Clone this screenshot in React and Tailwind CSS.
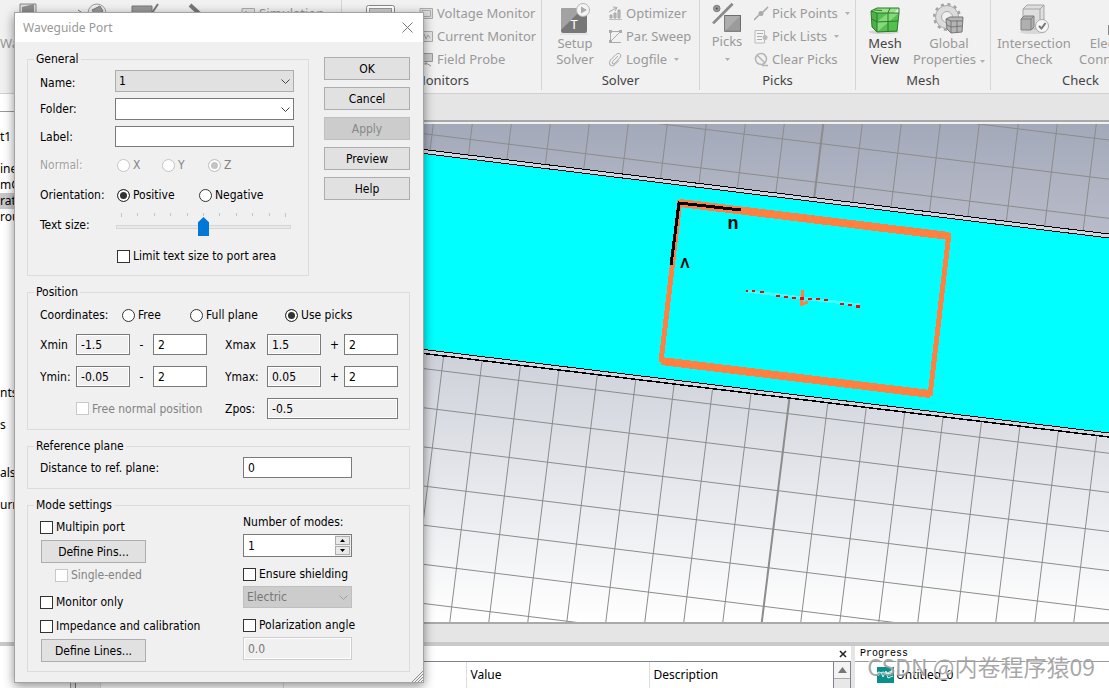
import React, { useState } from 'react';

/* ---------- ribbon icons ---------- */

const SolverIcon = () => (
  <svg width="34" height="33" viewBox="0 0 34 33">
    <rect x="3" y="6" width="26" height="25" rx="2" fill="#777" />
    <path d="M3 28 L25 6 H5 Q3 6 3 8 Z" fill="#a2a2a2" />
    <path d="M2 32 H30" stroke="#d8d8d8" />
    <circle cx="25" cy="8" r="6.500" fill="#f4f4f4" stroke="#b4b4b4" />
    <path d="M23 4.500 L29 8 L23 11.500 Z" fill="#aaa" />
    <text x="16" y="27" textAnchor="middle" fontSize="13" fill="#fff" fontFamily="Noto Sans, sans-serif">T</text>
  </svg>
);

const PicksIcon = () => (
  <svg width="34" height="33" viewBox="0 0 34 33">
    <path d="M2 23 L23 2" stroke="#8a8a8a" strokeWidth="3" />
    <circle cx="6" cy="7" r="3.500" fill="#999" stroke="#777" />
    <circle cx="6" cy="7" r="1" fill="#444" />
    <rect x="14.500" y="14.500" width="17" height="17" fill="#9b9b9b" stroke="#666" />
    <path d="M15 31 L31 15 H15 Z" fill="#adadad" />
  </svg>
);

const MeshIcon = () => (
  <svg width="34" height="33" viewBox="0 0 34 33">
    <ellipse cx="16" cy="30" rx="15" ry="2" fill="#d2d2d2" />
    <path d="M3 9 L9 6 H31 L26 11 H8 Z" fill="#9be08e" />
    <path d="M3 9 L9 11 V30 L4 25 Z" fill="#4fb04b" />
    <path d="M9 11 H31 L29 30 H9 Z" fill="#55bf50" />
    <path d="M9 30 L31 11 H20 L9 20 Z" fill="#85d97a" />
    <path d="M3 9 L9 11 H31 L29 29 L9 30 L4 25 Z M3 9 L9 6 H31 V11 M9 11 V30 M20 11 V30 M4 17 L9 20 L30 19 M6 8 L14 8.500 M20 11 L22 6" fill="none" stroke="#2b7a26" />
  </svg>
);

const GearIcon = () => (
  <svg width="34" height="33" viewBox="0 0 34 33">
    <circle cx="15" cy="15" r="12.500" fill="none" stroke="#a3a3a3" strokeWidth="3" strokeDasharray="3 3.545" />
    <circle cx="15" cy="15" r="8.500" fill="none" stroke="#dcdcdc" strokeWidth="6" />
    <circle cx="15" cy="15" r="11.500" fill="none" stroke="#aaa" />
    <circle cx="15" cy="15" r="5.500" fill="#f0f0f0" stroke="#aaa" />
    <path d="M14 17 L18 15 H31 L30 30 L19 31 L15 27 Z" fill="#b5b5b5" stroke="#777" />
    <path d="M14 17 L19 19 H31 M19 19 V31 M25 18 V30 M15 23 L19 25 L30 24" fill="none" stroke="#777" />
  </svg>
);

const IntersectionIcon = () => (
  <svg width="34" height="33" viewBox="0 0 34 33">
    <ellipse cx="16" cy="30" rx="13" ry="2" fill="#d8d8d8" />
    <path d="M6 7 L10 3 H27 V23 L23 27 H6 Z" fill="#dedede" stroke="#a5a5a5" />
    <path d="M6 7 H23 V26 M23 7 L27 3" fill="none" stroke="#a5a5a5" />
    <path d="M4 17 L7 14 H17 V25 L14 28 H4 Z" fill="#b0b0b0" stroke="#808080" />
    <path d="M4 17 H14 V28 M14 17 L17 14" fill="none" stroke="#808080" />
    <circle cx="25" cy="24" r="6.500" fill="#f6f6f6" stroke="#aaa" />
    <path d="M22 24 L24.500 26.500 L28.500 21" fill="none" stroke="#777" strokeWidth="2" />
  </svg>
);

const ConnectIcon = () => (
  <svg width="34" height="33" viewBox="0 0 34 33">
    <path d="M10 1 V11 H16 M9 33 V24 H14" fill="none" stroke="#888" strokeWidth="2" />
    <rect x="13" y="20" width="7" height="7" fill="#ccc" stroke="#888" />
  </svg>
);

const small = {
  voltage: <path d="M1 2.500 H13.500 V12.500 H1 Z M3 4.500 H11.500 V10.500 H3 Z" fill="#ddd" stroke="#aaa" />,
  current: <path d="M1 2.500 H13.500 V12.500 H1 Z M3 8 L5 5 L7 10 L9 6 L11 9" fill="#e4e4e4" stroke="#aaa" />,
  probe: <path d="M1 1.500 H13.500 V9.500 H1 Z M7 10 V13 M7 11 L2 14 M7 11 L12 14" fill="#ccc" stroke="#999" />,
  optimizer: (
    <>
      <path d="M1 13.500 H14" stroke="#bbb" />
      <path d="M2 9 H4 V12 H2 Z M6 7 H8 V12 H6 Z M10 4 H12 V12 H10 Z" fill="#bbb" stroke="#a6a6a6" />
      <path d="M1 6 L8 2 M5 1 L9 1.500 L7 5" fill="none" stroke="#aaa" />
    </>
  ),
  sweep: (
    <>
      <path d="M2.500 13 V2.500 H13 M2.500 12.500 L12 3 M2 13.500 H13" fill="none" stroke="#aaa" />
      <path d="M1 1 H4 V4 H1 Z M11 1 H14 V4 H11 Z M1 11 H4 V14 H1 Z" fill="#aaa" />
    </>
  ),
  logfile: <path d="M10 4 L4.500 9.500 Q3.500 11.500 5 12 Q6 12 7 11 L12.500 5 Q13.500 2.500 11.500 1.500 Q9.500 1 8 2.500 L2.500 8 Q0.500 11 2 13 Q4.500 15 7 12.500 L11 8.500" fill="none" stroke="#aaa" />,
  points: (
    <>
      <path d="M0 14 L5 9 M9 6 L14 1" stroke="#a5a5a5" strokeWidth="1.500" />
      <circle cx="7" cy="7.500" r="2.500" fill="#aaa" />
    </>
  ),
  lists: (
    <>
      <path d="M1 1.500 H10.500 V14 H1 Z" fill="#f5f5f5" stroke="#bbb" />
      <path d="M3 4.500 H9 M3 7.500 H8 M3 10.500 H8" stroke="#aaa" />
      <circle cx="11" cy="8.500" r="2.500" fill="#bbb" />
    </>
  ),
  clear: (
    <>
      <circle cx="7" cy="7" r="5.500" fill="none" stroke="#b5b5b5" strokeWidth="1.500" />
      <path d="M3 3 L11 11 M8 13.500 H14" stroke="#b5b5b5" strokeWidth="1.500" />
    </>
  ),
};

const SmallIcon = ({ name }) => (
  <svg width="15" height="15" viewBox="0 0 15 15" className="shrink-0">{small[name]}</svg>
);

const Caret = () => (
  <svg width="5" height="3" viewBox="0 0 5 3" className="shrink-0"><path d="M0 0 H5 L2.500 3 Z" fill="#b0b0b0" /></svg>
);

/* ---------- ribbon ---------- */

const RibbonGroup = ({ title, className, children }) => (
  <section className={`flex shrink-0 flex-col border-r border-[#d5d5d5] h-[90px] ${className}`}>
    <div className="flex h-[71px] pt-[2px]">{children}</div>
    <h2 className="text-center leading-[18px] text-[#444]">{title}</h2>
  </section>
);

const BigButton = ({ icon, lines, dark, caret, className }) => (
  <button className={`flex shrink-0 flex-col items-center leading-4 whitespace-nowrap ${dark ? 'text-[#444]' : 'text-[#999]'} ${className}`}>
    {icon}
    {lines.map((line, i) => (
      <span key={line} className="flex items-center gap-1">
        {line}
        {caret && i === 1 && <span className="pt-[5px]"><Caret /></span>}
      </span>
    ))}
    {caret && lines.length === 1 && <span className="flex h-6 items-center"><Caret /></span>}
  </button>
);

const SmallButton = ({ icon, text, caret }) => (
  <button className="flex h-[23px] items-center gap-[3px] text-[#999] whitespace-nowrap">
    <SmallIcon name={icon} />
    {text}
    {caret && <span className="pl-1"><Caret /></span>}
  </button>
);

const Ribbon = () => (
  <header className="flex h-[94px] shrink-0 overflow-hidden border-b border-[#d0d0d0] bg-[#f1f1f1] text-[13px] text-[#999]">
    <RibbonGroup title="" className="w-[342px]">
      <div className="flex">
        <span className="w-[15px] shrink-0 overflow-hidden pt-[33px] leading-4">Wa</span>
        <svg width="226" height="34" viewBox="15 0 226 34" className="shrink-0">
          <path d="M20 2 H36 V28 H20 Z" fill="#ddd" stroke="#888" />
          <path d="M22 5 L34 2 V28 H22 Z" fill="#8c8c8c" />
          <circle cx="97" cy="11" r="9" fill="#eee" stroke="#999" />
          <path d="M92 8 L100 4 L103 9 L96 14 Z M78 8 L84 12" fill="#999" stroke="#777" />
          <path d="M132 4 H152 V14 H132 Z" fill="#999" stroke="#777" />
          <path d="M158 2 L150 14" stroke="#777" strokeWidth="2" />
          <path d="M190 3 L202 14" stroke="#777" strokeWidth="4" />
        </svg>
        <SmallButton icon="current" text="Simulation" />
      </div>
    </RibbonGroup>
    <RibbonGroup title="Monitors" className="w-[200px]">
      <svg width="32" height="34" viewBox="0 0 32 34" className="ml-[23px] mr-[22px] shrink-0">
        <rect x="1.500" y="3.500" width="28" height="24" rx="2" fill="#fff" stroke="#888" />
        <rect x="4.500" y="6.500" width="22" height="17" fill="#ccc" stroke="#999" />
      </svg>
      <div>
        <SmallButton icon="voltage" text="Voltage Monitor" />
        <SmallButton icon="current" text="Current Monitor" />
        <SmallButton icon="probe" text="Field Probe" />
      </div>
    </RibbonGroup>
    <RibbonGroup title="Solver" className="w-[158px]">
      <BigButton icon={<SolverIcon />} lines={['Setup', 'Solver']} className="w-[66px]" />
      <div>
        <SmallButton icon="optimizer" text="Optimizer" />
        <SmallButton icon="sweep" text="Par. Sweep" />
        <SmallButton icon="logfile" text="Logfile" caret />
      </div>
    </RibbonGroup>
    <RibbonGroup title="Picks" className="w-[156px]">
      <BigButton icon={<PicksIcon />} lines={['Picks']} caret className="w-[54px]" />
      <div>
        <SmallButton icon="points" text="Pick Points" caret />
        <SmallButton icon="lists" text="Pick Lists" caret />
        <SmallButton icon="clear" text="Clear Picks" />
      </div>
    </RibbonGroup>
    <RibbonGroup title="Mesh" className="w-[135px]">
      <BigButton icon={<MeshIcon />} lines={['Mesh', 'View']} dark className="w-[58px]" />
      <BigButton icon={<GearIcon />} lines={['Global', 'Properties']} caret className="w-[70px]" />
    </RibbonGroup>
    <RibbonGroup title="Check" className="w-[180px]">
      <BigButton icon={<IntersectionIcon />} lines={['Intersection', 'Check']} className="w-[86px]" />
      <BigButton icon={<ConnectIcon />} lines={['Electrical', 'Connections']} className="w-[80px]" />
    </RibbonGroup>
  </header>
);

/* ---------- navigation tree ---------- */

const treeRows = [
  't1', '', 'ine', 'mG', 'rate', 'rou', '', '', '', '', '', '', '', '', '', '',
  'nts', '', 's', '', '', 'als', '', 'urre',
];

const Tree = () => (
  <nav className="w-[71px] shrink-0 overflow-hidden border-r border-[#999] bg-white text-xs">
    <div className="h-[18px] border-b border-[#999]" />
    <ul className="pt-[17px]">
      {treeRows.map((row, i) => (
        <li key={i} className={`h-4 w-[15px] overflow-hidden leading-4 ${row === 'rate' ? 'bg-[#c8c8c8]' : ''}`}>{row}</li>
      ))}
    </ul>
  </nav>
);

/* ---------- 3D view ---------- */

const range = (from, to) => Array.from({ length: to - from + 1 }, (_, i) => from + i);

const Viewport = () => (
  <svg className="min-h-0 w-full flex-1" viewBox="71 124 1038 498" preserveAspectRatio="xMaxYMin slice">
    <defs>
      <linearGradient id="sky" x1="0" y1="0" x2="0" y2="1">
        <stop offset="0" stopColor="#a4a9ba" />
        <stop offset="1" stopColor="#ffffff" />
      </linearGradient>
    </defs>
    <rect x="71" y="124" width="1038" height="498" fill="url(#sky)" />
    <g stroke="#8c8c8c" strokeWidth="1">
      {range(-20, 9).map((k) => (
        <line key={k} x1={823.3 + 39 * k} y1="124" x2={761.8 + 39 * k} y2="622" strokeWidth={k === 0 ? 2 : 1} />
      ))}
      {range(-2, 14).map((k) => (
        <line key={k} x1="71" y1={51 + 39.15 * k} x2="1109" y2={179.2 + 39.15 * k} />
      ))}
    </g>
    <g shapeRendering="crispEdges">
      <path d="M71 106 L1109 234 V437 L71 310 Z" fill="#d3d6e0" />
      <path d="M71 110 L1109 238 V433 L71 306 Z" fill="#00ffff" />
      <path d="M71 106 L1109 234 M71 110 L1109 238 M71 306.500 L1109 433" stroke="#000" fill="none" />
      <path d="M71 310.500 L1109 437" stroke="#000" strokeWidth="1.500" />
      <path d="M680 203 L949 236 M661 361 L930 394" stroke="#ff8040" strokeWidth="8" />
      <path d="M680 200 L661 362 M949 233 L930 396" stroke="#ff8040" strokeWidth="5" />
      <path d="M741 210 L679 203 L671 265" fill="none" stroke="#000" strokeWidth="3" />
      <path d="M746 291 L860 305" stroke="#40ffff" strokeWidth="3" />
      <path d="M803 290 L801 306 M802 304 L808 302" stroke="#ff8040" strokeWidth="3" />
      <path d="M746 291 h2 M752 291 h3 M760 292 h4 M776 296 h4 M784 297 h4 M792 298 h4 M808 299 h4 M816 299 h4 M824 300 h4 M840 304 h4 M848 305 h4" stroke="#ff0000" strokeWidth="2" />
      <path d="M800 298 h4 M856 306 h4" stroke="#ff0000" strokeWidth="3" />
    </g>
    <g fontFamily="Liberation Sans, sans-serif" fontWeight="bold" textAnchor="middle">
      <text x="733" y="229" fontSize="18">n</text>
      <text x="685" y="268" fontSize="14">Λ</text>
    </g>
  </svg>
);

/* ---------- bottom panels ---------- */

const BottomPanels = () => (
  <footer className="flex h-[46px] shrink-0 border-t-4 border-[#c9c9c9] bg-[#e5e5e5] text-xs">
    <div className="w-[71px] shrink-0 border-r border-[#999] bg-white" />
    <section className="ml-1 flex min-w-0 flex-1 flex-col border-l border-[#777] bg-white">
      <div className="flex h-4 shrink-0 items-center justify-end border-b border-[#83838f] pr-1">
        <button aria-label="Close parameter list">
          <svg width="8" height="8" viewBox="0 0 8 8"><path d="M1 1 L7 7 M7 1 L1 7" stroke="#222" strokeWidth="1.500" /></svg>
        </button>
      </div>
      <div className="flex flex-1">
        <table className="flex-1 table-fixed border-collapse">
          <thead>
            <tr className="h-[26px] text-left">
              <th className="w-[24px] border-r border-[#ddd] bg-[#f0f0f0]" />
              <th className="w-[183px] border-r border-[#ddd] pl-1 font-normal">Name</th>
              <th className="w-[183px] border-r border-[#ddd] pl-4 font-normal">Expression</th>
              <th className="w-[183px] border-r border-[#ddd] pl-1 font-normal">Value</th>
              <th className="pl-1 font-normal">Description</th>
            </tr>
          </thead>
        </table>
        <div className="w-[18px] border-x border-[#83838f] bg-[#e8e8e8]">
          <button aria-label="Scroll up" className="flex h-[17px] w-4 items-center justify-center border-b border-[#aaa] bg-[#f3f3f3]">
            <svg width="9" height="6" viewBox="0 0 9 6"><path d="M0 6 L4.500 0 L9 6 Z" fill="#777" /></svg>
          </button>
        </div>
      </div>
    </section>
    <section className="ml-1 w-[254px] shrink-0 bg-white">
      <h2 className="h-4 border-b border-[#999] pl-[5px] font-['Liberation_Mono',monospace] text-[10px] leading-4">Progress</h2>
      <div className="relative flex h-[26px] items-center gap-[2px] pl-[22px]">
        <svg width="17" height="16" viewBox="0 0 17 16">
          <rect width="17" height="16" fill="#0b8f8c" />
          <path d="M1 9 L4 5 L6 10 L9 4 L11 11 L16 9 M10 6 L15 4" fill="none" stroke="#d9f4f2" />
        </svg>
        <span>Untitled_0</span>
        <span className="absolute -top-2 right-[14px] text-[23px] leading-6 whitespace-nowrap text-[#999]/85 [text-shadow:-1px_-1px_0_#ffffffcc] font-['Noto_Sans_CJK_SC',sans-serif]">CSDN @内卷程序猿09</span>
      </div>
    </section>
  </footer>
);

/* ---------- dialog controls ---------- */

const Group = ({ title, className = '', children }) => (
  <fieldset className={`border border-[#dcdcdc] pl-3 ${className}`}>
    <legend className="-ml-[6px] px-[2px] leading-4">{title}</legend>
    {children}
  </fieldset>
);

const Button = ({ children, className = '', disabled }) => (
  <button
    disabled={disabled}
    className={`h-[23px] border border-[#adadad] bg-[#e1e1e1] leading-none disabled:border-[#bfbfbf] disabled:bg-[#ccc] disabled:text-[#888] ${className}`}
  >
    {children}
  </button>
);

const Radio = ({ label, className = '', ...rest }) => (
  <label className={`flex items-center gap-[3px] whitespace-nowrap ${rest.disabled ? 'text-[#838383]' : ''} ${className}`}>
    <input
      type="radio"
      className="size-[13px] shrink-0 appearance-none rounded-full border border-[#333] bg-white checked:bg-[#333] checked:shadow-[inset_0_0_0_2px_#fff] disabled:border-[#c4c4c4] disabled:checked:bg-[#c4c4c4]"
      {...rest}
    />
    {label}
  </label>
);

const Check = ({ label, className = '', disabled }) => (
  <label className={`flex h-4 items-center gap-[3px] whitespace-nowrap ${disabled ? 'text-[#838383]' : ''} ${className}`}>
    <input
      type="checkbox"
      disabled={disabled}
      className="size-[13px] shrink-0 appearance-none border border-[#333] bg-white checked:bg-[#333] checked:shadow-[inset_0_0_0_2px_#fff] disabled:border-[#c9c9c9]"
    />
    {label}
  </label>
);

const Field = ({ className = '', ...rest }) => (
  <input
    type="text"
    className={`h-[21px] min-w-0 border border-[#7a7a7a] bg-white px-1 read-only:bg-[#f0f0f0] read-only:shadow-[inset_0_0_0_1px_#fff] disabled:border-[#ccc] disabled:bg-[#f0f0f0] disabled:text-[#777] disabled:shadow-[inset_0_0_0_1px_#fff] ${className}`}
    {...rest}
  />
);

const Select = ({ id, options, className = '', selectClass, ...rest }) => (
  <div className={`relative ${className}`}>
    <select id={id} className={`h-[22px] w-full appearance-none border px-[3px] ${selectClass}`} {...rest}>
      {options.map((o) => <option key={o}>{o}</option>)}
    </select>
    <svg width="9" height="6" viewBox="0 0 9 6" className="pointer-events-none absolute right-1 top-[9px]">
      <path d="M0.500 0.500 L4.500 4.500 L8.500 0.500" fill="none" stroke={rest.disabled ? '#a0a0a0' : '#444'} />
    </svg>
  </div>
);

const PositionRow = ({ min, max, minId, maxId, minValue, maxValue }) => (
  <div className="mb-[11px] flex items-center">
    <label htmlFor={minId} className="w-9">{min}</label>
    <Field id={minId} className="w-[54px]" defaultValue={minValue} readOnly />
    <span className="w-[23px] text-center">-</span>
    <Field aria-label={`${min} offset`} className="w-[54px]" defaultValue="2" />
    <label htmlFor={maxId} className="ml-[18px] w-[42px]">{max}</label>
    <Field id={maxId} className="w-[54px]" defaultValue={maxValue} readOnly />
    <span className="w-[23px] pl-1 text-center">+</span>
    <Field aria-label={`${max} offset`} className="w-[54px]" defaultValue="2" />
  </div>
);

/* ---------- dialog ---------- */

const WaveguidePortDialog = () => {
  const [orientation, setOrientation] = useState('Positive');
  const [coords, setCoords] = useState('Use picks');
  const [modes, setModes] = useState(1);

  return (
    <div
      role="dialog"
      aria-label="Waveguide Port"
      className="absolute left-[14px] top-3 w-[410px] border border-[#a3a3a3] bg-[#f0f0f0] text-xs text-black shadow-[0_3px_10px_rgba(0,0,0,0.45)] font-['DejaVu_Sans_Condensed','DejaVu_Sans',sans-serif]"
    >
      <div className="flex h-[29px] items-center justify-between bg-white pl-2 pr-[10px] text-[#999] font-['Noto_Sans',sans-serif]">
        <span>Waveguide Port</span>
        <button aria-label="Close">
          <svg width="11" height="11" viewBox="0 0 11 11"><path d="M0.500 0.500 L10.500 10.500 M10.500 0.500 L0.500 10.500" stroke="#777" /></svg>
        </button>
      </div>

      <div className="flex flex-col gap-2 pb-[10px] pl-3 pr-[13px] pt-[9px]">
        <div className="flex justify-between">
          <Group title="General" className="w-[282px] pb-[11px] pr-[14px]">
            <div className="flex flex-col gap-[6px] pt-[3px]">
              <div className="flex items-center">
                <label htmlFor="name" className="w-[75px] pt-[3px]">Name:</label>
                <Select id="name" options={['1']} className="flex-1" selectClass="border-[#adadad] bg-[#e1e1e1]" />
              </div>
              <div className="flex items-center">
                <label htmlFor="folder" className="w-[75px]">Folder:</label>
                <Select id="folder" options={['']} className="flex-1" selectClass="border-[#7a7a7a] bg-white" />
              </div>
              <div className="flex items-center">
                <label htmlFor="label" className="w-[75px]">Label:</label>
                <Field id="label" className="flex-1" />
              </div>
            </div>
            <div role="radiogroup" aria-label="Normal" className="mt-[7px] flex h-[22px] items-center">
              <span className="w-[77px] text-[#a0a0a0] [text-shadow:1px_1px_0_#fff]">Normal:</span>
              <Radio name="normal" label="X" disabled className="w-[45px]" />
              <Radio name="normal" label="Y" disabled className="w-[46px]" />
              <Radio name="normal" label="Z" disabled defaultChecked />
            </div>
            <div role="radiogroup" aria-label="Orientation" className="mt-2 flex h-[22px] items-center">
              <span className="w-[77px]">Orientation:</span>
              {['Positive', 'Negative'].map((o) => (
                <Radio key={o} name="orientation" label={o} className="w-[82px]" checked={orientation === o} onChange={() => setOrientation(o)} />
              ))}
            </div>
            <div className="mt-1 flex h-[30px] items-center">
              <label htmlFor="textsize" className="w-[76px]">Text size:</label>
              <div className="w-[175px]">
                <div className="flex h-1 justify-between px-[5px]">
                  {range(0, 10).map((t) => (
                    <i key={t} className={`w-px bg-[#c4c4c4] ${t === 0 || t === 10 ? 'h-1' : 'h-[3px]'}`} />
                  ))}
                </div>
                <input
                  id="textsize"
                  type="range"
                  min="0"
                  max="10"
                  defaultValue="5"
                  className="block h-5 w-full appearance-none bg-transparent [&::-webkit-slider-runnable-track]:h-1 [&::-webkit-slider-runnable-track]:border [&::-webkit-slider-runnable-track]:border-[#d6d6d6] [&::-webkit-slider-runnable-track]:bg-[#e7eaea] [&::-webkit-slider-thumb]:-mt-[9px] [&::-webkit-slider-thumb]:h-[19px] [&::-webkit-slider-thumb]:w-[11px] [&::-webkit-slider-thumb]:appearance-none [&::-webkit-slider-thumb]:bg-[#0078d7] [&::-webkit-slider-thumb]:[clip-path:polygon(50%_0,100%_28%,100%_100%,0_100%,0_28%)]"
                />
              </div>
            </div>
            <Check label="Limit text size to port area" className="ml-[77px] mt-2" />
          </Group>

          <div className="flex w-[86px] flex-col gap-[7px] pt-[6px]">
            <Button>OK</Button>
            <Button>Cancel</Button>
            <Button disabled>Apply</Button>
            <Button>Preview</Button>
            <Button>Help</Button>
          </div>
        </div>

        <Group title="Position" className="pb-[10px]">
          <div role="radiogroup" aria-label="Coordinates" className="mb-[11px] mt-[7px] flex h-4 items-center">
            <span className="w-[82px]">Coordinates:</span>
            <Radio name="coords" label="Free" className="w-[68px]" checked={coords === 'Free'} onChange={() => setCoords('Free')} />
            <Radio name="coords" label="Full plane" className="w-[95px]" checked={coords === 'Full plane'} onChange={() => setCoords('Full plane')} />
            <Radio name="coords" label="Use picks" checked={coords === 'Use picks'} onChange={() => setCoords('Use picks')} />
          </div>
          <PositionRow min="Xmin" max="Xmax" minId="xmin" maxId="xmax" minValue="-1.5" maxValue="1.5" />
          <PositionRow min="Ymin:" max="Ymax:" minId="ymin" maxId="ymax" minValue="-0.05" maxValue="0.05" />
          <div className="flex items-center">
            <Check label="Free normal position" disabled className="ml-9 w-[149px]" />
            <label htmlFor="zpos" className="w-[42px]">Zpos:</label>
            <Field id="zpos" className="w-[131px]" defaultValue="-0.5" readOnly />
          </div>
        </Group>

        <Group title="Reference plane" className="pb-[10px]">
          <div className="mt-[3px] flex items-center">
            <label htmlFor="refdist" className="w-[203px]">Distance to ref. plane:</label>
            <Field id="refdist" className="w-[109px]" defaultValue="0" />
          </div>
        </Group>

        <Group title="Mode settings" className="pb-[9px]">
          <div className="flex">
            <div className="flex w-[203px] flex-col items-start pt-[6px]">
              <Check label="Multipin port" />
              <Button className="ml-px mt-[5px] w-[105px]">Define Pins...</Button>
              <Check label="Single-ended" disabled className="ml-[15px] mt-1" />
              <Check label="Monitor only" className="mt-[11px]" />
              <Check label="Impedance and calibration" className="mt-2" />
              <Button className="ml-px mt-[5px] w-[105px]">Define Lines...</Button>
            </div>
            <div className="flex w-[109px] flex-col pt-px">
              <label htmlFor="modes" className="leading-4">Number of modes:</label>
              <div className="mt-1 flex h-[23px] border border-[#7a7a7a] bg-white">
                <input
                  id="modes"
                  type="text"
                  className="min-w-0 flex-1 px-1"
                  value={modes}
                  onChange={(e) => setModes(Number(e.target.value) || 1)}
                />
                <div className="flex w-4 flex-col justify-between bg-[#f0f0f0] py-px pr-px">
                  <button aria-label="More modes" onClick={() => setModes(modes + 1)} className="flex h-[9px] items-center justify-center border border-[#adadad] bg-[#e9e9e9]">
                    <svg width="5" height="3" viewBox="0 0 5 3"><path d="M0 3 L2.500 0 L5 3 Z" /></svg>
                  </button>
                  <button aria-label="Fewer modes" onClick={() => setModes(Math.max(1, modes - 1))} className="flex h-[9px] items-center justify-center border border-[#adadad] bg-[#e9e9e9]">
                    <svg width="5" height="3" viewBox="0 0 5 3"><path d="M0 0 L2.500 3 L5 0 Z" /></svg>
                  </button>
                </div>
              </div>
              <Check label="Ensure shielding" className="mt-[9px]" />
              <Select id="shield" aria-label="Shielding type" disabled options={['Electric']} className="mt-1" selectClass="border-[#bfbfbf] bg-[#ccc] text-[#777]" />
              <Check label="Polarization angle" className="mt-[9px]" />
              <Field aria-label="Polarization angle value" disabled defaultValue="0.0" className="mt-1 h-[23px]" />
            </div>
          </div>
        </Group>
      </div>

      <svg width="11" height="11" viewBox="0 0 11 11" className="absolute bottom-0 right-0">
        <path d="M0 11 L11 0 M3 11 L11 3 M6 11 L11 6 M9 11 L11 9" stroke="#8c8c8c" />
      </svg>
    </div>
  );
};

const App = () => {
  return (
    <div className="relative flex h-screen flex-col overflow-hidden bg-[#e5e5e5] font-['Noto_Sans',sans-serif] text-black">
      <Ribbon />
      <main className="flex min-h-0 flex-1">
        <Tree />
        <div className="flex min-w-0 flex-1 flex-col">
          <div className="h-7 shrink-0 border-b-2 border-[#a9a9a9]" />
          <div className="h-[2px] shrink-0 bg-[#f0f0f0]" />
          <Viewport />
          <div className="h-5 shrink-0 border-t-2 border-[#a9a9a9]" />
        </div>
      </main>
      <BottomPanels />
      <WaveguidePortDialog />
    </div>
  );
};

export default App;
